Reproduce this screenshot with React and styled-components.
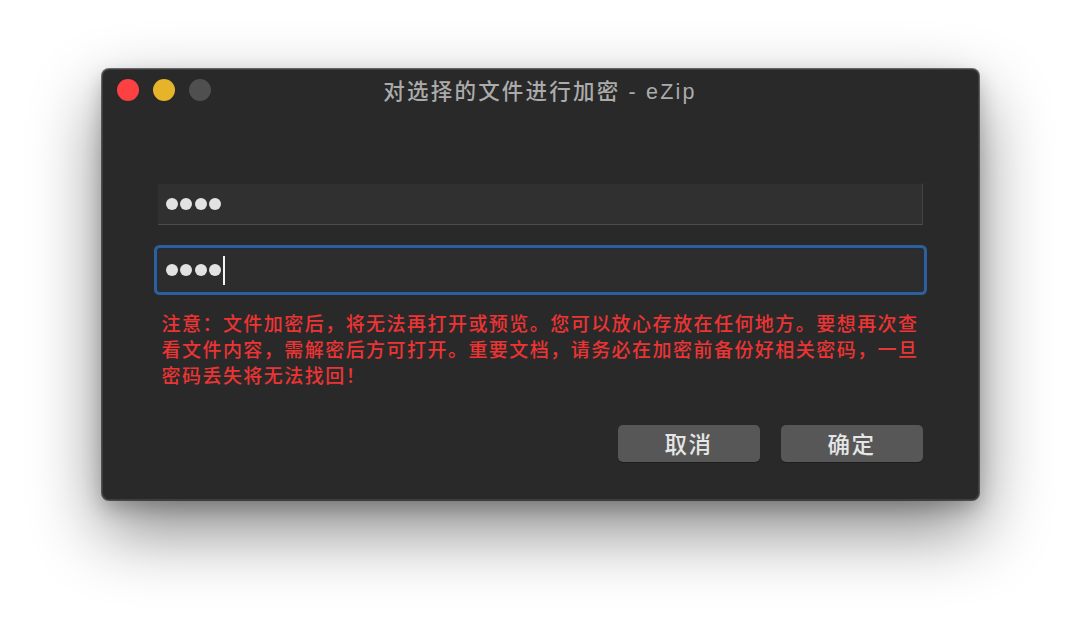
import React from 'react'
import styled, { createGlobalStyle } from 'styled-components'

const GlobalStyle = createGlobalStyle`
  html, body {
    margin: 0;
    padding: 0;
    background: #ffffff;
  }
  body {
    font-family: "Liberation Sans", "Noto Sans CJK SC", sans-serif;
  }
`

const Page = styled.div`
  width: 1080px;
  height: 635px;
  display: flex;
  justify-content: center;
  align-items: flex-start;
  padding-top: 69px;
  box-sizing: border-box;
`

const Window = styled.div`
  width: 877px;
  height: 431px;
  background: #292929;
  border-radius: 7px;
  box-shadow:
    inset 0 0 0 1px rgba(255, 255, 255, 0.1),
    0 0 0 1px rgba(0, 0, 0, 0.55),
    0 30px 70px rgba(0, 0, 0, 0.48),
    0 8px 20px rgba(0, 0, 0, 0.22);
  display: flex;
  flex-direction: column;
  box-sizing: border-box;
`

const TitleBar = styled.div`
  display: grid;
  grid-template-columns: 1fr auto 1fr;
  align-items: center;
  height: 42px;
  padding: 0 15px;
  box-sizing: border-box;
`

const Lights = styled.div`
  display: flex;
  gap: 14px;
`

const Light = styled.span`
  width: 22px;
  height: 22px;
  border-radius: 50%;
  background: ${p => p.color};
`

const Title = styled.div`
  font-size: 21.5px;
  font-weight: 500;
  letter-spacing: 2.2px;
  color: #ababab;
  white-space: nowrap;
  margin-top: -1px;
`

const Body = styled.div`
  display: flex;
  flex-direction: column;
  padding: 72px 56px 0;
`

const Field = styled.div`
  height: 42px;
  box-sizing: border-box;
  display: flex;
  align-items: center;
  gap: 2.5px;
  padding-left: 8px;
  background: ${p => (p.focused ? '#2d2d2d' : '#303030')};
  border-top: 1px solid #2a2a2a;
  border-bottom: 1px solid ${p => (p.focused ? '#2d2d2d' : '#4c4c4c')};
  border-right: 1px solid ${p => (p.focused ? '#2d2d2d' : '#444444')};
  border-radius: ${p => (p.focused ? '2px' : '0')};
  box-shadow: ${p => (p.focused ? '0 0 0 1px #1d2f45, 0 0 0 4px #2e5f9a' : 'none')};
  margin-top: ${p => (p.focused ? '24px' : '0')};
`

const Dot = styled.span`
  width: 12px;
  height: 12px;
  border-radius: 50%;
  background: #e2e2e2;
`

const Caret = styled.span`
  width: 2px;
  height: 29px;
  background: #f2f2f2;
  margin-left: -1px;
`

const Notice = styled.p`
  margin: 19px 0 0;
  padding-left: 4px;
  width: 768px;
  font-family: "Noto Sans CJK SC", sans-serif;
  font-size: 19px;
  font-weight: 500;
  letter-spacing: 1.46px;
  line-height: 26px;
  color: #ec3434;
`

const Actions = styled.div`
  display: flex;
  justify-content: flex-end;
  gap: 21px;
  margin-top: 37px;
`

const Button = styled.button`
  width: 142px;
  height: 37px;
  border: none;
  border-radius: 5px;
  background: #575757;
  color: #e6e6e6;
  font-family: "Noto Sans CJK SC", sans-serif;
  font-size: 22.5px;
  font-weight: 500;
  letter-spacing: 1.5px;
  line-height: 37px;
  padding: 0;
  box-shadow: 0 1px 0 rgba(0, 0, 0, 0.25);
`

const Password = ({ count, focused }) => (
  <Field focused={focused}>
    {Array.from({ length: count }).map((_, i) => <Dot key={i} />)}
    {focused && <Caret />}
  </Field>
)

export default function App() {
  return (
    <Page>
      <GlobalStyle />
      <Window>
        <TitleBar>
          <Lights>
            <Light color="#fd4143" />
            <Light color="#e6b42a" />
            <Light color="#4f4f4f" />
          </Lights>
          <Title>对选择的文件进行加密 - eZip</Title>
          <div />
        </TitleBar>
        <Body>
          <Password count={4} />
          <Password count={4} focused />
          <Notice>
            注意：文件加密后，将无法再打开或预览。您可以放心存放在任何地方。要想再次查看文件内容，需解密后方可打开。重要文档，请务必在加密前备份好相关密码，一旦密码丢失将无法找回！
          </Notice>
          <Actions>
            <Button>取消</Button>
            <Button>确定</Button>
          </Actions>
        </Body>
      </Window>
    </Page>
  )
}
